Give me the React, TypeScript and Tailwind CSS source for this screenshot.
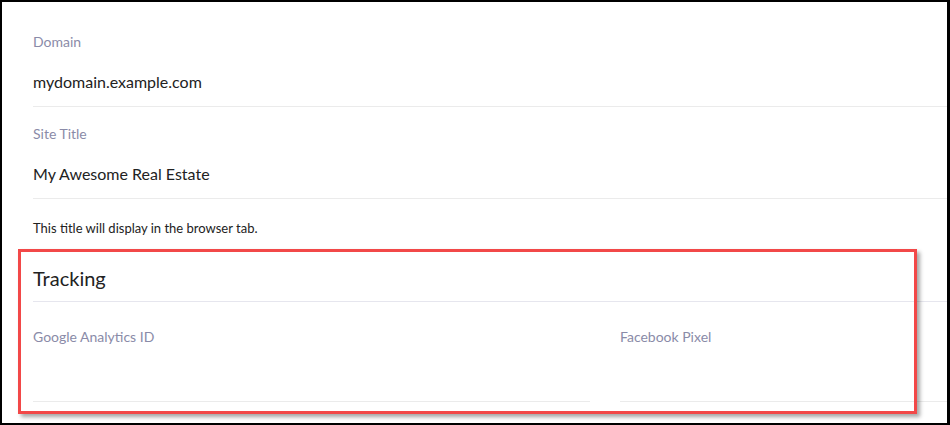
import React from 'react'

const labelCls = "text-[14px] leading-[20px] text-[#8a8ba8]"
const valueCls = "text-[16px] leading-[24px] text-[#222]"

function Field({ label, value }: { label: string; value: string }) {
  return (
    <div className="border-b border-[#ebebeb] pb-[12px] pt-[17px]">
      <div className={labelCls}>{label}</div>
      <div className={`${valueCls} mt-[18px]`}>{value}</div>
    </div>
  )
}

function EmptyField({ label }: { label: string }) {
  return (
    <div className="border-b border-[#ebebeb] pt-[25px] h-[100px]">
      <div className={labelCls}>{label}</div>
    </div>
  )
}

export default function App() {
  return (
    <div
      className="relative h-[425px] w-[950px] overflow-hidden border-t-2 border-l-2 border-r-[3px] border-b-2 border-black bg-white"
      style={{ fontFamily: 'Lato, "Open Sans", sans-serif' }}
    >
      <div className="w-[1200px] pl-[31px] pt-[13px]">
        <Field label="Domain" value="mydomain.example.com" />
        <Field label="Site Title" value="My Awesome Real Estate" />
        <p className="pt-[20px] text-[13px] leading-[18px] text-[#222]">
          This title will display in the browser tab.
        </p>
        <h2 className="mt-[27px] border-b border-[#e6e6ee] pb-[9px] text-[20px] leading-[28px] text-[#222]">
          Tracking
        </h2>
        <div className="grid grid-cols-[557px_557px] gap-x-[30px]">
          <EmptyField label="Google Analytics ID" />
          <EmptyField label="Facebook Pixel" />
        </div>
      </div>

      {/* highlight box */}
      <div className="pointer-events-none absolute left-[16px] top-[247px] h-[165px] w-[899px] border-[3px] border-[#f24848] shadow-[3px_3px_4px_rgba(0,0,0,0.35)]" />
    </div>
  )
}
